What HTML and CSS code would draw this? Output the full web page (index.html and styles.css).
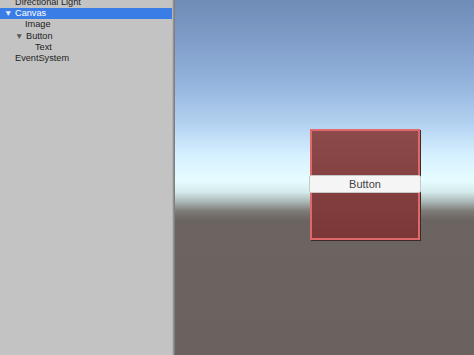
FILE: index.html
```html
<!DOCTYPE html>
<html>
<head>
<meta charset="utf-8">
<link rel="stylesheet" href="styles.css">
</head>
<body>
<div class="app">
  <div class="hierarchy">
    <div class="row first"><span class="label lvl0">Directional Light</span></div>
    <div class="row selected"><span class="arrow">▼</span><span class="label">Canvas</span></div>
    <div class="row"><span class="label lvl1">Image</span></div>
    <div class="row"><span class="arrow lvl1a">▼</span><span class="label">Button</span></div>
    <div class="row"><span class="label lvl2">Text</span></div>
    <div class="row"><span class="label lvl0">EventSystem</span></div>
  </div>
  <div class="splitter"></div>
  <div class="scene">
    <div class="ui-image">
      <div class="ui-button">Button</div>
    </div>
  </div>
</div>
</body>
</html>
```
FILE: styles.css
```css
html, body {
  margin: 0;
  padding: 0;
  width: 474px;
  height: 355px;
  overflow: hidden;
}
.app {
  display: flex;
  width: 474px;
  height: 355px;
  font-family: "Liberation Sans", Arial, sans-serif;
}
.hierarchy {
  width: 172px;
  flex: none;
  background: #c3c3c3;
}
.row {
  height: 11.3px;
  line-height: 11px;
  font-size: 9.2px;
  color: #1e1e1e;
  display: flex;
  align-items: center;
  white-space: nowrap;
}
.row.first {
  margin-top: -3.3px;
}
.row.selected {
  background: #3b7de6;
  color: #ffffff;
}
.arrow {
  font-size: 8.5px;
  width: 10px;
  padding-left: 4px;
  box-sizing: content-box;
  margin-right: 1px;
}
.row .arrow.lvl1a {
  padding-left: 15px;
  color: #5a5a5a;
}
.selected .arrow {
  color: #dfe9ff;
}
.label.lvl0 { padding-left: 15px; }
.label.lvl1 { padding-left: 25px; }
.label.lvl2 { padding-left: 35px; }
.splitter {
  width: 3px;
  flex: none;
  background: linear-gradient(to right, #b4b4b4 0 1px, #939393 1px 2px, #7e7e7e 2px);
}
.scene {
  flex: 1;
  position: relative;
  background: linear-gradient(to bottom,
    #6e8cb6 0px,
    #7f9dc8 40px,
    #98b8e0 90px,
    #b4d3f2 125px,
    #d6f0ff 155px,
    #e6fcff 180px,
    #d5ebeb 192px,
    #a9b6b5 202px,
    #7e7b77 211px,
    #6c6460 220px,
    #6a625e 355px);
}
.ui-image {
  position: absolute;
  left: 135px;
  top: 129px;
  width: 110px;
  height: 111px;
  box-sizing: border-box;
  border: 2px solid #e0686a;
  background: linear-gradient(to bottom, #8c4a4b, #7b3738);
  box-shadow: 1px 1px 0 #3c2a2a;
  display: flex;
  align-items: center;
}
.ui-button {
  margin: 0 -3px;
  flex: 1;
  height: 18px;
  margin-top: -1px;
  background: #f5f5f5;
  border: 1px solid #c8c8c8;
  border-radius: 2px;
  box-sizing: border-box;
  font-size: 11px;
  color: #444444;
  text-align: center;
  line-height: 16px;
}
```
